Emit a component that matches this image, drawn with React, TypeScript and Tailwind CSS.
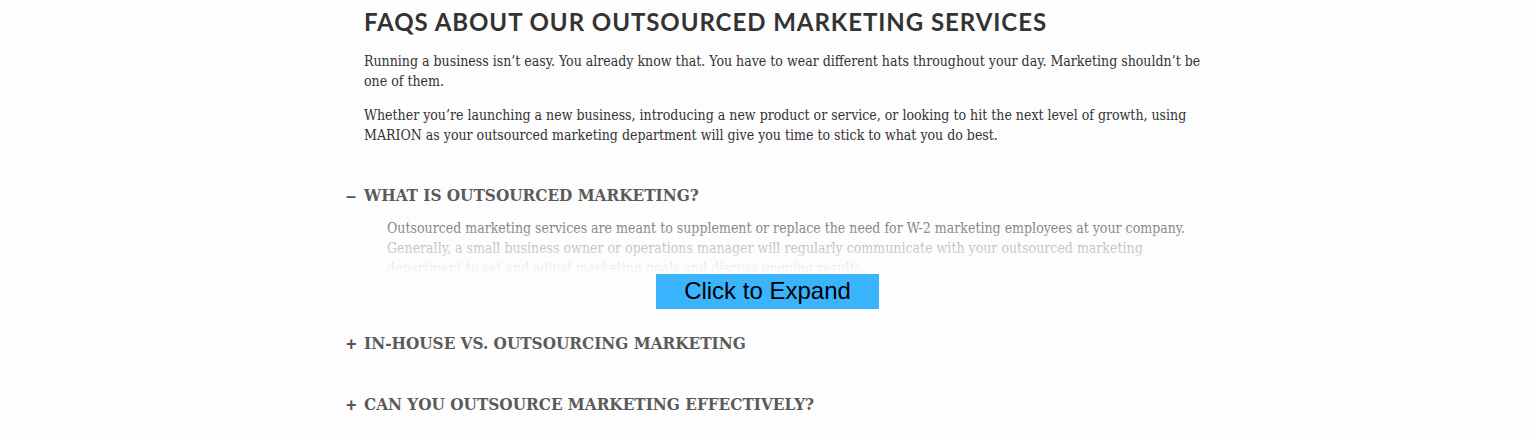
import React from "react";

const slab = { fontFamily: '"DejaVu Serif Condensed", "DejaVu Serif", serif' };

type Faq = { q: string; a?: string; open?: boolean };

const faqs: Faq[] = [
  {
    q: "What is outsourced marketing?",
    open: true,
    a: "Outsourced marketing services are meant to supplement or replace the need for W-2 marketing employees at your company. Generally, a small business owner or operations manager will regularly communicate with your outsourced marketing department to set and adjust marketing goals and discuss ongoing results.",
  },
  { q: "In-house vs. outsourcing marketing" },
  { q: "Can you outsource marketing effectively?" },
];

function Question({ item }: { item: Faq }) {
  return (
    <div className="flex items-center h-[24px]">
      <span
        className="w-[18px] -ml-[18px] text-[18px] font-bold text-[#555]"
        style={{ fontFamily: '"Liberation Sans", Arial, sans-serif' }}
      >
        {item.open ? "\u2013" : "+"}
      </span>
      <h3 className="text-[17px] font-bold uppercase text-[#5a5a5a]" style={slab}>
        {item.q}
      </h3>
    </div>
  );
}

export default function App() {
  return (
    <div className="w-[1536px] h-[433px] overflow-hidden bg-[#fdfdfd]">
      <div className="ml-[364px] w-[860px] pt-[8px]">
        <h2
          className="text-[24px] leading-[28px] font-bold uppercase text-[#333] tracking-[0.95px]"
          style={{ fontFamily: 'Lato, "Liberation Sans", sans-serif' }}
        >
          FAQs About Our Outsourced Marketing Services
        </h2>
        <div className="mt-[15px] text-[14px] leading-[20px] text-[#333]" style={slab}>
          <p>
            Running a business isn’t easy. You already know that. You have to wear different hats throughout your
            day. Marketing shouldn’t be one of them.
          </p>
          <p className="mt-[14px]">
            Whether you’re launching a new business, introducing a new product or service, or looking to hit the
            next level of growth, using MARION as your outsourced marketing department will give you time to stick
            to what you do best.
          </p>
        </div>

        <div className="mt-[39px]">
          <Question item={faqs[0]} />
          <div className="relative mt-[10px] ml-[23px] h-[56px] overflow-hidden">
            <p className="text-[14px] leading-[20px] text-[#666] pr-[10px]" style={slab}>
              {faqs[0].a}
            </p>
            <div className="absolute inset-0 bg-gradient-to-b from-[#fdfdfd]/0 via-[#fdfdfd]/60 to-[#fdfdfd]" />
          </div>
          <div className="flex ml-[292px] mt-[-1px]">
            <button
              className="w-[223px] h-[36px] bg-[#3bb4fe] text-black text-[24px] leading-[36px] text-center"
              style={{ fontFamily: '"Liberation Sans", Arial, sans-serif' }}
            >
              Click to Expand
            </button>
          </div>
          <div className="mt-[23px]">
            <Question item={faqs[1]} />
          </div>
          <div className="mt-[37px]">
            <Question item={faqs[2]} />
          </div>
        </div>
      </div>
    </div>
  );
}
